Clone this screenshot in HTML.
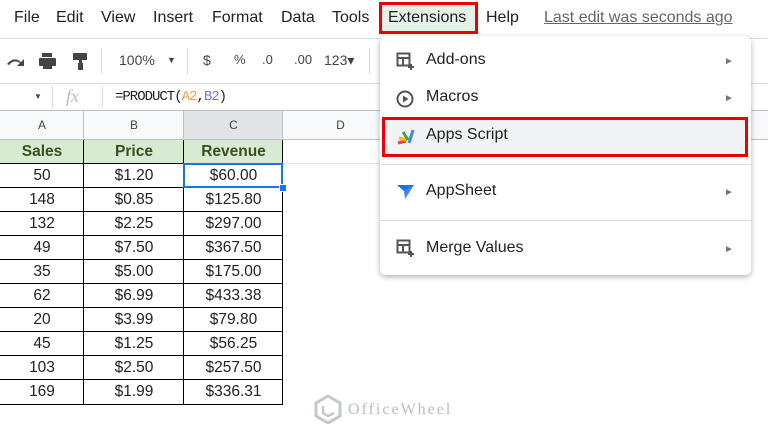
<!DOCTYPE html>
<html><head><style>
body{margin:0;width:768px;height:448px;overflow:hidden;background:#fff;font-family:"Liberation Sans",Arial,sans-serif;position:relative}
.a{position:absolute}
.m{top:9px;font-size:16px;color:#202124}
.cell{position:absolute;height:24px;line-height:24px;text-align:center;font-size:15.5px;color:#222;box-sizing:border-box}
.hl{position:absolute;left:0;width:283px;height:1px;background:#000}
.vl{position:absolute;top:140px;width:1px;height:265px;background:#000}
.mi{position:absolute;left:426px;font-size:16px;color:#202124}
.arr{position:absolute;left:724px;font-size:10px;color:#777}
</style></head><body>
<div class="a m" style="left:14px">File</div>
<div class="a m" style="left:56px">Edit</div>
<div class="a m" style="left:101px">View</div>
<div class="a m" style="left:153px">Insert</div>
<div class="a m" style="left:212px">Format</div>
<div class="a m" style="left:281px">Data</div>
<div class="a m" style="left:332px">Tools</div>
<div class="a" style="left:379px;top:2px;width:99px;height:32px;box-sizing:border-box;border:3px solid #e00;background:#e6f2e8"></div>
<div class="a m" style="left:388px">Extensions</div>
<div class="a m" style="left:486px">Help</div>
<div class="a m" style="left:544px;color:#666;text-decoration:underline">Last edit was seconds ago</div>
<div class="a" style="left:0;top:38px;width:768px;height:1px;background:#dadce0"></div>
<svg class="a" style="left:4px;top:52px" width="24" height="18"><path d="M3 12 Q10 4 17 10 L20 7 L20 14 L13 14 L16 11 Q10 7 5 13Z" fill="#444"/></svg>
<svg class="a" style="left:37px;top:51px" width="22" height="20"><rect x="5" y="2" width="10" height="4" fill="#444"/><rect x="2" y="7" width="17" height="8" rx="1" fill="#444"/><rect x="6" y="12" width="9" height="6" fill="#444"/></svg>
<svg class="a" style="left:72px;top:51px" width="18" height="20"><rect x="1" y="2" width="14" height="7" fill="#444"/><rect x="7" y="9" width="3" height="3" fill="#444"/><rect x="6" y="12" width="5" height="7" fill="#444"/></svg>
<div class="a" style="left:101px;top:48px;width:1px;height:26px;background:#dadce0"></div>
<div class="a" style="left:119px;top:52px;font-size:14px;color:#444">100%</div>
<div class="a" style="left:167px;top:55px;font-size:9px;color:#444">▼</div>
<div class="a" style="left:187px;top:48px;width:1px;height:26px;background:#dadce0"></div>
<div class="a" style="left:203px;top:52px;font-size:14px;color:#444">$</div>
<div class="a" style="left:234px;top:52px;font-size:13px;color:#444">%</div>
<div class="a" style="left:262px;top:52px;font-size:13px;color:#444">.0</div>
<div class="a" style="left:294px;top:52px;font-size:13px;color:#444">.00</div>
<div class="a" style="left:324px;top:52px;font-size:14px;color:#444">123▾</div>
<div class="a" style="left:369px;top:48px;width:1px;height:26px;background:#dadce0"></div>
<div class="a" style="left:0;top:83px;width:768px;height:1px;background:#dadce0"></div>
<div class="a" style="left:34px;top:92px;font-size:8px;color:#444">▼</div>
<div class="a" style="left:52px;top:86px;width:1px;height:22px;background:#dadce0"></div>
<div class="a" style="left:66px;top:86px;font-size:18px;color:#bbb;font-style:italic;font-family:'Liberation Serif',serif">fx</div>
<div class="a" style="left:102px;top:86px;width:1px;height:22px;background:#dadce0"></div>
<div class="a" style="left:115px;top:89px;font-size:14px;color:#222;font-family:'Liberation Mono',monospace;letter-spacing:-1px">=PRODUCT(<span style="color:#e8a04a">A2</span>,<span style="color:#8b6fc8">B2</span>)</div>
<div class="a" style="left:0;top:110px;width:768px;height:1px;background:#c0c0c0"></div>
<div class="a" style="left:0;top:111px;width:768px;height:28px;background:#f8f9fa"></div>
<div class="a" style="left:184px;top:111px;width:99px;height:28px;background:#e1e3e6"></div>
<div class="cell" style="left:0;top:113px;width:84px;font-size:12px;color:#444">A</div>
<div class="cell" style="left:84px;top:113px;width:100px;font-size:12px;color:#444">B</div>
<div class="cell" style="left:184px;top:113px;width:99px;font-size:12px;color:#444">C</div>
<div class="cell" style="left:283px;top:113px;width:115px;font-size:12px;color:#444">D</div>
<div class="a" style="left:83px;top:111px;width:1px;height:28px;background:#c0c0c0"></div>
<div class="a" style="left:183px;top:111px;width:1px;height:28px;background:#c0c0c0"></div>
<div class="a" style="left:282px;top:111px;width:1px;height:28px;background:#c0c0c0"></div>
<div class="a" style="left:0;top:139px;width:768px;height:1px;background:#c0c0c0"></div>
<div class="a" style="left:0;top:140px;width:283px;height:24px;background:#d9ead3"></div>
<div class="cell" style="left:0;top:140px;width:84px;font-weight:bold;color:#38501e">Sales</div>
<div class="cell" style="left:84px;top:140px;width:100px;font-weight:bold;color:#38501e">Price</div>
<div class="cell" style="left:184px;top:140px;width:99px;font-weight:bold;color:#38501e">Revenue</div>
<div class="hl" style="top:163px"></div><div class="hl" style="top:187px"></div><div class="hl" style="top:211px"></div><div class="hl" style="top:235px"></div><div class="hl" style="top:259px"></div><div class="hl" style="top:283px"></div><div class="hl" style="top:307px"></div><div class="hl" style="top:331px"></div><div class="hl" style="top:355px"></div><div class="hl" style="top:379px"></div><div class="hl" style="top:404px"></div>
<div class="vl" style="left:83px"></div><div class="vl" style="left:183px"></div><div class="vl" style="left:282px"></div>
<div class="cell" style="left:0;top:164px;width:84px">50</div><div class="cell" style="left:84px;top:164px;width:100px">$1.20</div><div class="cell" style="left:184px;top:164px;width:99px">$60.00</div>
<div class="cell" style="left:0;top:188px;width:84px">148</div><div class="cell" style="left:84px;top:188px;width:100px">$0.85</div><div class="cell" style="left:184px;top:188px;width:99px">$125.80</div>
<div class="cell" style="left:0;top:212px;width:84px">132</div><div class="cell" style="left:84px;top:212px;width:100px">$2.25</div><div class="cell" style="left:184px;top:212px;width:99px">$297.00</div>
<div class="cell" style="left:0;top:236px;width:84px">49</div><div class="cell" style="left:84px;top:236px;width:100px">$7.50</div><div class="cell" style="left:184px;top:236px;width:99px">$367.50</div>
<div class="cell" style="left:0;top:260px;width:84px">35</div><div class="cell" style="left:84px;top:260px;width:100px">$5.00</div><div class="cell" style="left:184px;top:260px;width:99px">$175.00</div>
<div class="cell" style="left:0;top:284px;width:84px">62</div><div class="cell" style="left:84px;top:284px;width:100px">$6.99</div><div class="cell" style="left:184px;top:284px;width:99px">$433.38</div>
<div class="cell" style="left:0;top:308px;width:84px">20</div><div class="cell" style="left:84px;top:308px;width:100px">$3.99</div><div class="cell" style="left:184px;top:308px;width:99px">$79.80</div>
<div class="cell" style="left:0;top:332px;width:84px">45</div><div class="cell" style="left:84px;top:332px;width:100px">$1.25</div><div class="cell" style="left:184px;top:332px;width:99px">$56.25</div>
<div class="cell" style="left:0;top:356px;width:84px">103</div><div class="cell" style="left:84px;top:356px;width:100px">$2.50</div><div class="cell" style="left:184px;top:356px;width:99px">$257.50</div>
<div class="cell" style="left:0;top:380px;width:84px">169</div><div class="cell" style="left:84px;top:380px;width:100px">$1.99</div><div class="cell" style="left:184px;top:380px;width:99px">$336.31</div>
<div class="a" style="left:183px;top:163px;width:100px;height:25px;box-sizing:border-box;border:2px solid #1a73e8"></div>
<div class="a" style="left:279px;top:184px;width:6px;height:6px;background:#1a73e8;border:1px solid #fff"></div>
<div class="a" style="left:283px;top:163px;width:100px;height:1px;background:#e2e2e2"></div>
<svg class="a" style="left:313px;top:394px" width="30" height="30"><path d="M15 2 L27 9 L27 22 L15 29 L3 22 L3 9Z" fill="none" stroke="#c3c7cf" stroke-width="3"/><path d="M10 12 L10 19 L15 22 L21 19" fill="none" stroke="#c3c7cf" stroke-width="2.5"/></svg>
<div class="a" style="left:348px;top:401px;font-size:16px;color:#b8bcc4;letter-spacing:2px;font-family:'Liberation Serif',serif">OfficeWheel</div>
<div class="a" style="left:380px;top:36px;width:371px;height:239px;background:#fff;border-radius:6px;box-shadow:0 2px 6px rgba(0,0,0,.3)"></div>
<svg class="a" style="left:396px;top:52px" width="20" height="20"><rect x="1.5" y="1.5" width="12" height="12" fill="none" stroke="#555" stroke-width="2"/><path d="M1.5 6h12M7 6v8" stroke="#555" stroke-width="2"/><path d="M15 12v6M12 15h6" stroke="#555" stroke-width="2"/></svg>
<div class="mi" style="top:51px">Add-ons</div><div class="arr" style="top:56px">►</div>
<svg class="a" style="left:396px;top:89px" width="20" height="20"><circle cx="9" cy="10" r="7.5" fill="none" stroke="#555" stroke-width="2"/><path d="M7 6.5v7l5.5-3.5z" fill="#555"/></svg>
<div class="mi" style="top:88px">Macros</div><div class="arr" style="top:93px">►</div>
<div class="a" style="left:382px;top:117px;width:366px;height:40px;background:#f1f3f4;box-sizing:border-box;border:3px solid #e00"></div>
<svg class="a" style="left:396px;top:127px" width="20" height="20"><path d="M2 16 L10 14" stroke="#ea4335" stroke-width="3"/><path d="M3 11 L11 13" stroke="#fbbc04" stroke-width="3"/><path d="M7 5 L12 13" stroke="#34a853" stroke-width="3"/><path d="M17 3 L13 16" stroke="#4285f4" stroke-width="3"/></svg>
<div class="mi" style="top:126px">Apps Script</div>
<div class="a" style="left:381px;top:164px;width:369px;height:1px;background:#dadce0"></div>
<svg class="a" style="left:396px;top:183px" width="20" height="18"><path d="M1 2 L18 2 L9 16 L8 8Z" fill="#4285f4"/><path d="M1 2 L18 2 L8 8Z" fill="#1a73e8"/></svg>
<div class="mi" style="top:182px">AppSheet</div><div class="arr" style="top:187px">►</div>
<div class="a" style="left:381px;top:220px;width:369px;height:1px;background:#dadce0"></div>
<svg class="a" style="left:396px;top:239px" width="20" height="20"><rect x="1.5" y="1.5" width="12" height="12" fill="none" stroke="#555" stroke-width="2"/><path d="M1.5 6h12M7 6v8" stroke="#555" stroke-width="2"/><path d="M15 12v6M12 15h6" stroke="#555" stroke-width="2"/></svg>
<div class="mi" style="top:239px">Merge Values</div><div class="arr" style="top:244px">►</div>
</body></html>
